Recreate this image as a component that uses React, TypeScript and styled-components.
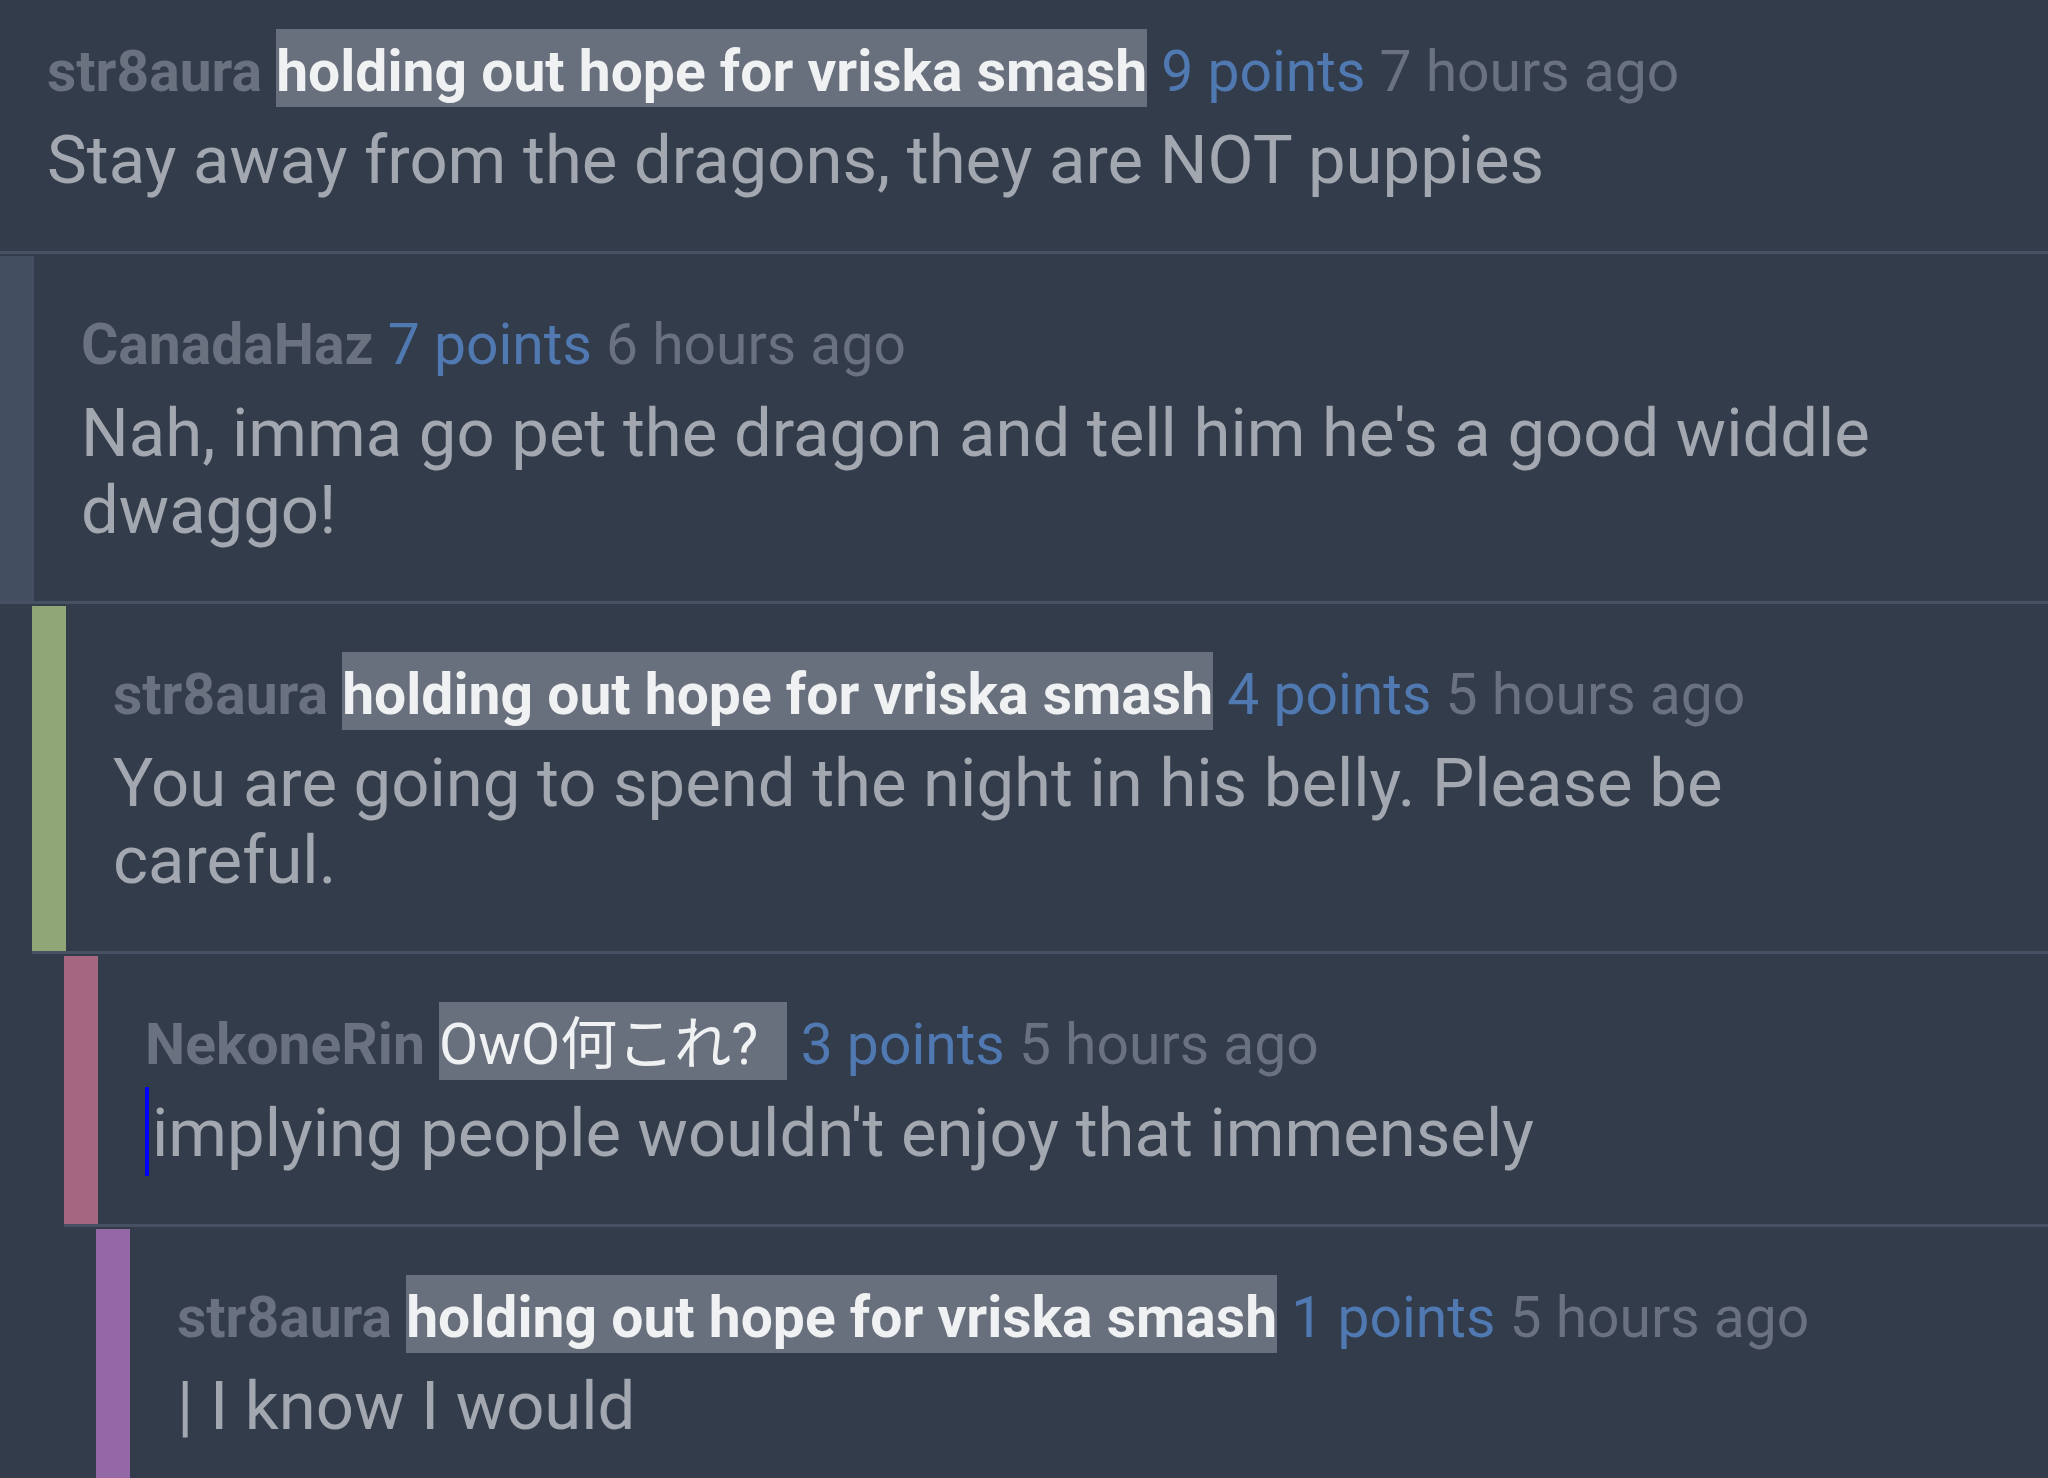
import React from 'react';
import styled, { createGlobalStyle } from 'styled-components';

const GlobalStyle = createGlobalStyle`
  html, body {
    margin: 0;
    padding: 0;
    background: #323c4b;
  }

  body {
    font-family: Roboto, 'Noto Sans CJK JP', sans-serif;
    height: 1478px;
    overflow: hidden;
  }
`;

type CommentData = {
  id: number,
  depth: number,
  bar?: string,
  user: string,
  flair?: string,
  flairWeight?: number,
  points: number,
  time: string,
  body: React.ReactNode,
  quoted?: boolean
};

const comments: CommentData[] = [
  {
    id: 1,
    depth: 0,
    user: 'str8aura',
    flair: 'holding out hope for vriska smash',
    points: 9,
    time: '7 hours ago',
    body: 'Stay away from the dragons, they are NOT puppies'
  },
  {
    id: 2,
    depth: 1,
    bar: '#434e61',
    user: 'CanadaHaz',
    points: 7,
    time: '6 hours ago',
    body: 'Nah, imma go pet the dragon and tell him he\'s a good widdle dwaggo!'
  },
  {
    id: 3,
    depth: 2,
    bar: '#8fa777',
    user: 'str8aura',
    flair: 'holding out hope for vriska smash',
    points: 4,
    time: '5 hours ago',
    body: 'You are going to spend the night in his belly. Please be careful.'
  },
  {
    id: 4,
    depth: 3,
    bar: '#a5677f',
    user: 'NekoneRin',
    flair: 'OwO何これ?\u00a0\u00a0',
    flairWeight: 400,
    points: 3,
    time: '5 hours ago',
    body: 'implying people wouldn\'t enjoy that immensely',
    quoted: true
  },
  {
    id: 5,
    depth: 4,
    bar: '#9467a6',
    user: 'str8aura',
    flair: 'holding out hope for vriska smash',
    points: 1,
    time: '5 hours ago',
    body: '| I know I would'
  }
];

const Thread = styled.div`
  display: flex;
  flex-direction: column;
  gap: 2px;
  margin-top: -17px;
`;

const CommentRow = styled.div<{ $depth: number }>`
  margin-left: ${({ $depth }) => ($depth > 1 ? ($depth - 1) * 32 : 0)}px;
  border-bottom: 3px solid #465164;
`;

const CommentBody = styled.div<{ $bar?: string }>`
  border-left: ${({ $bar }) => ($bar ? `34px solid ${$bar}` : 'none')};
  padding: 47px 130px 52px 47px;
`;

const Header = styled.div`
  padding-top: 7px;
  font-size: 57px;
  line-height: 70px;
  white-space: nowrap;
  color: #6a7280;
`;

const User = styled.span`
  font-weight: 700;
  color: #6a7280;
`;

const Flair = styled.span<{ $weight: number }>`
  font-weight: ${({ $weight }) => $weight};
  color: #f0f1f2;
  background: #69707d;
  padding: 8.6px 0 1.6px;
`;

const Points = styled.span`
  color: #5079b2;
`;

const Time = styled.span`
  color: #6a7280;
`;

const Text = styled.div`
  margin-top: 15px;
  font-size: 67px;
  line-height: 77px;
  color: #a3a8b0;
`;

const Quote = styled.div`
  margin: -8px 0 -4px 0;
  padding: 8px 0 4px 3px;
  border-left: 4px solid #0000ff;
`;

function Comment ({ comment }: { comment: CommentData }) {
  return (
    <CommentRow $depth={comment.depth}>
      <CommentBody $bar={comment.bar}>
        <Header>
          <User>{comment.user}</User>{' '}
          {comment.flair && (
            <>
              <Flair $weight={comment.flairWeight ?? 700}>{comment.flair}</Flair>{' '}
            </>
          )}
          <Points>{comment.points} points</Points>{' '}
          <Time>{comment.time}</Time>
        </Header>
        <Text>
          {comment.quoted ? <Quote>{comment.body}</Quote> : comment.body}
        </Text>
      </CommentBody>
    </CommentRow>
  );
}

export default function App () {
  return (
    <>
      <GlobalStyle />
      <Thread>
        {comments.map((c) => (
          <Comment comment={c} key={c.id} />
        ))}
      </Thread>
    </>
  );
}
